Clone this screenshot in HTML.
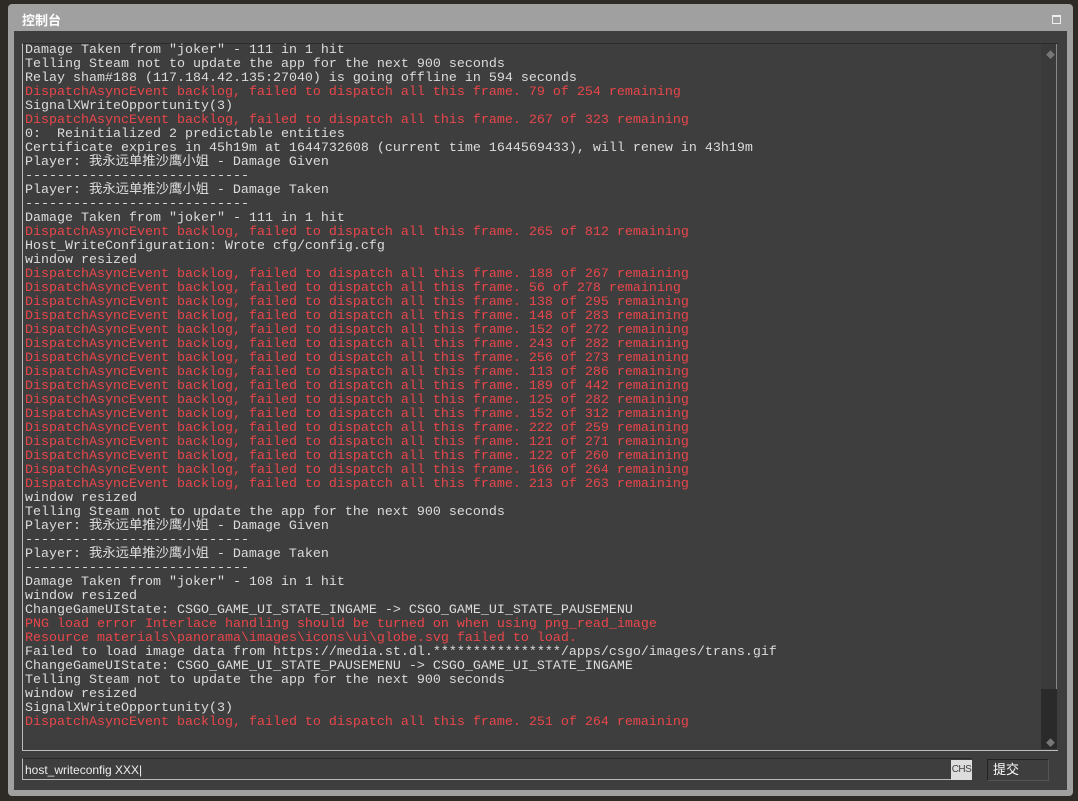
<!DOCTYPE html><html><head><meta charset="utf-8"><style>
body{margin:0;width:1078px;height:801px;background:#2e2a26;position:relative;overflow:hidden;font-family:"Liberation Mono","Noto Sans CJK SC",monospace}
.win{position:absolute;left:8px;top:4px;width:1065px;height:792px;background:#a0a0a0;border-radius:4px}
.title{position:absolute;left:22px;top:10px;color:#fff;font:bold 13px "Liberation Sans","Noto Sans CJK SC",sans-serif}
.max{position:absolute;left:1052px;top:15px;width:7px;height:6px;border:1px solid #eee;border-top-width:2px}
.panel{position:absolute;left:14px;top:31px;width:1053px;height:759px;background:#3e3e3e}
.ta{position:absolute;left:22px;top:43px;width:1035px;height:706px;border-left:1px solid #bbb;border-bottom:1px solid #bbb;border-top:1px solid #2a2a2a;background:#3e3e3e}
.sb{position:absolute;left:1041px;top:44px;width:16px;height:705px;background:#2a2a2a}
.thumb{position:absolute;left:1041px;top:44px;width:15px;height:645px;background:#3a3a3a;border-right:1px solid #888}
.log{position:absolute;left:25px;top:44px;font-size:13.33px;line-height:14px;color:#dcdcdc;white-space:pre}
.r{color:#e8464a}
.inp{position:absolute;left:22px;top:758px;width:950px;height:22px;border-left:1px solid #bbb;border-bottom:1px solid #bbb;border-top:1px solid #2a2a2a;background:#3e3e3e;color:#eee;font:12px "Liberation Sans",sans-serif;line-height:22px;box-sizing:border-box;padding-left:2px}
.chs{position:absolute;left:951px;top:760px;width:21px;height:20px;background:#ddd;color:#444;font:10px "Liberation Sans",sans-serif;line-height:20px;text-align:center;letter-spacing:-0.5px}
.btn{position:absolute;left:987px;top:759px;width:62px;height:22px;border:1px solid #222;border-right-color:#555;border-bottom-color:#555;box-sizing:border-box;color:#fff;font:13px "Liberation Sans","Noto Sans CJK SC",sans-serif;line-height:20px;padding-left:5px}
</style></head><body>
<div class="win"></div>
<div class="title">控制台</div><div class="max"></div>
<div class="panel"></div>
<div class="ta"></div>
<div class="sb"></div><div class="thumb"></div>
<div style="position:absolute;left:1046px;top:48px;color:#777;font-size:9px">◆</div>
<div style="position:absolute;left:1046px;top:736px;color:#777;font-size:9px">◆</div>
<div class="log">Damage Taken from "joker" - 111 in 1 hit
Telling Steam not to update the app for the next 900 seconds
Relay sham#188 (117.184.42.135:27040) is going offline in 594 seconds
<span class="r">DispatchAsyncEvent backlog, failed to dispatch all this frame. 79 of 254 remaining</span>
SignalXWriteOpportunity(3)
<span class="r">DispatchAsyncEvent backlog, failed to dispatch all this frame. 267 of 323 remaining</span>
0:  Reinitialized 2 predictable entities
Certificate expires in 45h19m at 1644732608 (current time 1644569433), will renew in 43h19m
Player: 我永远单推沙鹰小姐 - Damage Given
----------------------------
Player: 我永远单推沙鹰小姐 - Damage Taken
----------------------------
Damage Taken from "joker" - 111 in 1 hit
<span class="r">DispatchAsyncEvent backlog, failed to dispatch all this frame. 265 of 812 remaining</span>
Host_WriteConfiguration: Wrote cfg/config.cfg
window resized
<span class="r">DispatchAsyncEvent backlog, failed to dispatch all this frame. 188 of 267 remaining
DispatchAsyncEvent backlog, failed to dispatch all this frame. 56 of 278 remaining
DispatchAsyncEvent backlog, failed to dispatch all this frame. 138 of 295 remaining
DispatchAsyncEvent backlog, failed to dispatch all this frame. 148 of 283 remaining
DispatchAsyncEvent backlog, failed to dispatch all this frame. 152 of 272 remaining
DispatchAsyncEvent backlog, failed to dispatch all this frame. 243 of 282 remaining
DispatchAsyncEvent backlog, failed to dispatch all this frame. 256 of 273 remaining
DispatchAsyncEvent backlog, failed to dispatch all this frame. 113 of 286 remaining
DispatchAsyncEvent backlog, failed to dispatch all this frame. 189 of 442 remaining
DispatchAsyncEvent backlog, failed to dispatch all this frame. 125 of 282 remaining
DispatchAsyncEvent backlog, failed to dispatch all this frame. 152 of 312 remaining
DispatchAsyncEvent backlog, failed to dispatch all this frame. 222 of 259 remaining
DispatchAsyncEvent backlog, failed to dispatch all this frame. 121 of 271 remaining
DispatchAsyncEvent backlog, failed to dispatch all this frame. 122 of 260 remaining
DispatchAsyncEvent backlog, failed to dispatch all this frame. 166 of 264 remaining
DispatchAsyncEvent backlog, failed to dispatch all this frame. 213 of 263 remaining</span>
window resized
Telling Steam not to update the app for the next 900 seconds
Player: 我永远单推沙鹰小姐 - Damage Given
----------------------------
Player: 我永远单推沙鹰小姐 - Damage Taken
----------------------------
Damage Taken from "joker" - 108 in 1 hit
window resized
ChangeGameUIState: CSGO_GAME_UI_STATE_INGAME -&gt; CSGO_GAME_UI_STATE_PAUSEMENU
<span class="r">PNG load error Interlace handling should be turned on when using png_read_image
Resource materials\panorama\images\icons\ui\globe.svg failed to load.</span>
Failed to load image data from https://media.st.dl.****************/apps/csgo/images/trans.gif
ChangeGameUIState: CSGO_GAME_UI_STATE_PAUSEMENU -&gt; CSGO_GAME_UI_STATE_INGAME
Telling Steam not to update the app for the next 900 seconds
window resized
SignalXWriteOpportunity(3)
<span class="r">DispatchAsyncEvent backlog, failed to dispatch all this frame. 251 of 264 remaining</span></div>
<div class="inp">host_writeconfig XXX|</div>
<div class="chs">CHS</div>
<div class="btn">提交</div>
</body></html>
